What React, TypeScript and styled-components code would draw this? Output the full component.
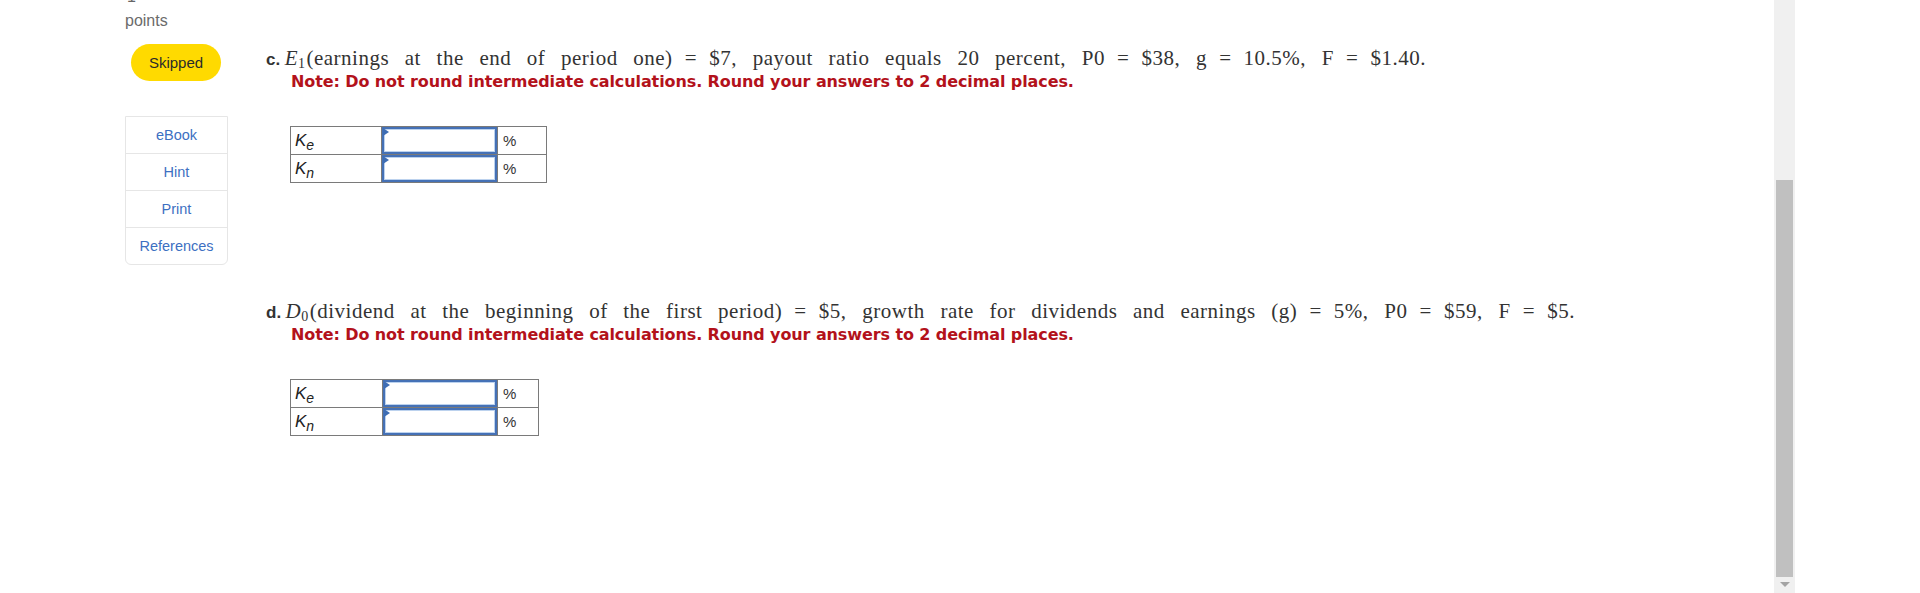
import React from 'react';
import styled, { createGlobalStyle } from 'styled-components';

const GlobalStyle = createGlobalStyle`
  html, body {
    margin: 0;
    padding: 0;
    background: #ffffff;
  }
  body {
    font-family: 'Liberation Sans', Arial, sans-serif;
    color: #333333;
    overflow: hidden;
  }
`;

interface Row {
  symbol: string;
  sub: string;
}

interface QuestionProps {
  part: string;
  gapTop: number;
  columns: [number, number, number];
  prompt: React.ReactNode;
}

const rows: Row[] = [
  { symbol: 'K', sub: 'e' },
  { symbol: 'K', sub: 'n' },
];

const tools = ['eBook', 'Hint', 'Print', 'References'];

const Question: React.FC<QuestionProps> = ({ part, gapTop, columns, prompt }) => (
  <QuestionBlock $gapTop={gapTop}>
    <Prompt>
      <PartLabel>{part}.</PartLabel> <MathText>{prompt}</MathText>
    </Prompt>
    <Note>Note: Do not round intermediate calculations. Round your answers to 2 decimal places.</Note>
    <AnswerTable>
      <colgroup>
        <col style={{ width: columns[0] }} />
        <col style={{ width: columns[1] }} />
        <col style={{ width: columns[2] }} />
      </colgroup>
      <tbody>
        {rows.map((r) => (
          <tr key={r.sub}>
            <LabelCell>
              <Var>{r.symbol}</Var>
              <VarSub>{r.sub}</VarSub>
            </LabelCell>
            <InputCell>
              <AnswerInput />
              <Flag />
            </InputCell>
            <UnitCell>%</UnitCell>
          </tr>
        ))}
      </tbody>
    </AnswerTable>
  </QuestionBlock>
);

const App: React.FC = () => (
  <Page>
    <GlobalStyle />
    <Main>
      <Rail>
        <PointsValue>1</PointsValue>
        <PointsLabel>points</PointsLabel>
        <SkippedBadge>Skipped</SkippedBadge>
        <ToolList>
          {tools.map((t) => (
            <ToolItem key={t}>{t}</ToolItem>
          ))}
        </ToolList>
      </Rail>
      <Questions>
        <Question
          part="c"
          gapTop={45}
          columns={[91, 116, 49]}
          prompt={
            <>
              <MathVar>E</MathVar>
              <MathSub>1</MathSub>(earnings at the end of period one) <Op>=</Op> $7, payout ratio equals 20 percent, P0 <Op>=</Op> $38, g <Op>=</Op> 10.5%, F <Op>=</Op> $1.40.
            </>
          }
        />
        <Question
          part="d"
          gapTop={115}
          columns={[92, 115, 41]}
          prompt={
            <>
              <MathVar>D</MathVar>
              <MathSub>0</MathSub>(dividend at the beginning of the first period) <Op>=</Op> $5, growth rate for dividends and earnings (g) <Op>=</Op> 5%, P0 <Op>=</Op> $59, F <Op>=</Op> $5.
            </>
          }
        />
      </Questions>
    </Main>
    <Scrollbar>
      <ScrollThumb />
      <ScrollArrow />
    </Scrollbar>
    <Gutter />
  </Page>
);

const Page = styled.div`
  display: flex;
  width: 1920px;
  height: 593px;
  overflow: hidden;
`;

const Main = styled.div`
  display: flex;
  width: 1774px;
  height: 593px;
  background: #ffffff;
`;

const Rail = styled.div`
  display: flex;
  flex-direction: column;
  align-items: flex-start;
  width: 103px;
  padding-left: 125px;
  flex-shrink: 0;
`;

const PointsValue = styled.div`
  margin-top: -11px;
  margin-left: 2px;
  height: 16px;
  font-size: 16px;
  line-height: 16px;
  color: #666666;
`;

const PointsLabel = styled.div`
  margin-top: 7px;
  font-size: 16px;
  line-height: 18px;
  color: #6b6b6b;
`;

const SkippedBadge = styled.div`
  display: flex;
  align-items: center;
  justify-content: center;
  margin-top: 14px;
  margin-left: 6px;
  width: 90px;
  height: 37px;
  border-radius: 19px;
  background: #ffda00;
  font-size: 15px;
  color: #2b2b2b;
`;

const ToolList = styled.div`
  display: flex;
  flex-direction: column;
  margin-top: 35px;
  width: 103px;
  border: 1px solid #e6e6e6;
  border-radius: 0 0 6px 6px;
  box-sizing: border-box;
`;

const ToolItem = styled.div`
  display: flex;
  align-items: center;
  justify-content: center;
  height: 36px;
  font-size: 14.5px;
  color: #3d70c2;
  & + & {
    border-top: 1px solid #e6e6e6;
  }
`;

const Questions = styled.div`
  display: flex;
  flex-direction: column;
  margin-left: 38px;
`;

const QuestionBlock = styled.div<{ $gapTop: number }>`
  display: flex;
  flex-direction: column;
  align-items: flex-start;
  margin-top: ${(p) => p.$gapTop}px;
`;

const Prompt = styled.div`
  height: 26px;
  line-height: 26px;
  white-space: nowrap;
`;

const PartLabel = styled.span`
  font-family: 'Liberation Sans', Arial, sans-serif;
  font-weight: 700;
  font-size: 17px;
  color: #333333;
`;

const MathText = styled.span`
  font-family: 'Liberation Serif', 'Times New Roman', serif;
  font-size: 21px;
  color: #333333;
  letter-spacing: 0.5px;
  word-spacing: 9.9px;
`;

const MathVar = styled.i`
  font-style: italic;
`;

const MathSub = styled.sub`
  font-size: 14px;
  vertical-align: -3px;
  line-height: 0;
  margin-right: 1px;
`;

const Op = styled.span`
  margin: 0 -3.5px;
`;

const Note = styled.div`
  margin-top: 1px;
  margin-left: 25px;
  font-family: 'DejaVu Sans', 'Liberation Sans', sans-serif;
  font-weight: 700;
  font-size: 16px;
  line-height: 20px;
  letter-spacing: -0.1px;
  color: #b3121b;
  white-space: nowrap;
`;

const AnswerTable = styled.table`
  margin-top: 34px;
  margin-left: 24px;
  border-collapse: collapse;
  table-layout: fixed;
`;

const cellBase = `
  border: 1px solid #7a7a7a;
  height: 27px;
  padding: 0;
  vertical-align: middle;
`;

const LabelCell = styled.td`
  ${cellBase}
  padding-left: 4px;
  font-family: 'Liberation Sans', Arial, sans-serif;
  font-size: 17px;
  color: #222222;
`;

const Var = styled.i`
  font-style: italic;
`;

const VarSub = styled.i`
  font-style: italic;
  font-size: 14px;
  position: relative;
  top: 4px;
`;

const InputCell = styled.td`
  ${cellBase}
  position: relative;
`;

const AnswerInput = styled.div`
  height: 27px;
  box-sizing: border-box;
  border: 2px solid #4571b6;
  box-shadow: inset 0 0 0 1px #bcd2ee;
  background: #ffffff;
`;

const Flag = styled.span`
  position: absolute;
  top: 1px;
  left: 1px;
  width: 0;
  height: 0;
  border-top: 4px solid transparent;
  border-bottom: 4px solid transparent;
  border-left: 6px solid #3e6db4;
`;

const UnitCell = styled.td`
  ${cellBase}
  padding-left: 5px;
  font-size: 15px;
  color: #333333;
`;

const Scrollbar = styled.div`
  display: flex;
  flex-direction: column;
  align-items: center;
  width: 21px;
  height: 593px;
  background: #f0f0f0;
  padding-top: 180px;
  box-sizing: border-box;
  flex-shrink: 0;
`;

const ScrollThumb = styled.div`
  width: 17px;
  height: 397px;
  background: #c0c0c0;
`;

const ScrollArrow = styled.div`
  margin-top: 5px;
  width: 0;
  height: 0;
  border-left: 5px solid transparent;
  border-right: 5px solid transparent;
  border-top: 5px solid #a3a3a3;
`;

const Gutter = styled.div`
  flex: 1;
  background: #ffffff;
`;

export default App;
